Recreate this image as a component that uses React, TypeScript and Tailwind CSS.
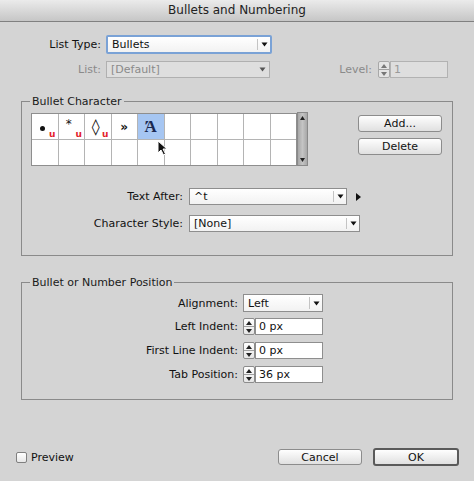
import React from "react";

function Arrow({ disabled }: { disabled?: boolean }) {
  return (
    <svg width="7" height="5" viewBox="0 0 7 5">
      <path d="M0.5 0.5 L6.5 0.5 L3.5 4.5 Z" fill={disabled ? "#555" : "#111"} />
    </svg>
  );
}

function Select({
  cls,
  value,
  disabled,
  focus,
  sep = true,
}: {
  cls: string;
  value: string;
  disabled?: boolean;
  focus?: boolean;
  sep?: boolean;
}) {
  return (
    <div
      className={
        cls +
        " flex items-stretch " +
        (focus
          ? "border-2 border-[#7aa2d6] rounded-[2px] "
          : "border border-[#8e8e8e] ") +
        (disabled
          ? "bg-[#dedede] border-[#b0b0b0] text-[#8a8a8a]"
          : "bg-gradient-to-b from-[#ffffff] to-[#f2f2f2] text-[#111]")
      }
    >
      <div className="flex-1 flex items-center pl-[4px] whitespace-nowrap overflow-hidden">
        {value}
      </div>
      <div
        className={
          "w-[13px] my-[2px] flex items-center justify-center " +
          (sep ? "border-l border-[#c4c4c4]" : "")
        }
      >
        <Arrow disabled={disabled} />
      </div>
    </div>
  );
}

function Spinner({ disabled }: { disabled?: boolean }) {
  const c = disabled ? "#777" : "#222";
  return (
    <div
      className={
        "w-[12px] h-[17px] flex flex-col border rounded-[2px] " +
        (disabled
          ? "border-[#a8a8a8] bg-[#e4e4e4]"
          : "border-[#8c8c8c] bg-gradient-to-b from-[#ffffff] to-[#e6e6e6]")
      }
    >
      <div className="flex-1 flex items-center justify-center border-b border-[#a0a0a0]">
        <svg width="6" height="4" viewBox="0 0 6 4">
          <path d="M0 4 L6 4 L3 0 Z" fill={c} />
        </svg>
      </div>
      <div className="flex-1 flex items-center justify-center">
        <svg width="6" height="4" viewBox="0 0 6 4">
          <path d="M0 0 L6 0 L3 4 Z" fill={c} />
        </svg>
      </div>
    </div>
  );
}

function NumField({ value, cls }: { value: string; cls: string }) {
  return (
    <div className="flex items-center">
      <Spinner />
      <div
        className={
          cls +
          " h-[17px] border border-[#8e8e8e] bg-white flex items-center pl-[3px] text-[#111]"
        }
      >
        {value}
      </div>
    </div>
  );
}

function Button({ label, cls }: { label: string; cls: string }) {
  return (
    <div
      className={
        cls +
        " flex items-center justify-center rounded-[3px] bg-gradient-to-b from-[#fefefe] to-[#e0e0e0] text-[#111]"
      }
    >
      {label}
    </div>
  );
}

function RedU() {
  return (
    <span className="absolute right-[2px] bottom-[0px] text-[9px] leading-[9px] font-bold text-[#e3212c]">
      u
    </span>
  );
}

export default function App() {
  const cells: React.ReactNode[] = [];
  for (let i = 0; i < 20; i++) {
    let content: React.ReactNode = null;
    let sel = false;
    if (i === 0)
      content = (
        <>
          <span className="block w-[5px] h-[5px] rounded-full bg-[#111] mr-[5px] mt-[4px]" />
          <RedU />
        </>
      );
    if (i === 1)
      content = (
        <>
          <span className="text-[12px] leading-[12px] mr-[5px] mb-[5px]">*</span>
          <RedU />
        </>
      );
    if (i === 2)
      content = (
        <>
          <span className="text-[16px] leading-[16px] mr-[4px] font-bold">◊</span>
          <RedU />
        </>
      );
    if (i === 3)
      content = <span className="text-[12px] leading-[12px] font-bold">»</span>;
    if (i === 4) {
      sel = true;
      content = (
        <span className="text-[17px] leading-[17px] font-['Liberation_Serif',serif] font-bold text-[#1b2a52]">
          Ά
        </span>
      );
    }
    cells.push(
      <div
        key={i}
        className={
          "relative flex items-center justify-center " +
          (sel ? "bg-[#a6c6f2]" : "bg-white")
        }
      >
        {content}
      </div>
    );
  }

  return (
    <div className="w-[474px] h-[481px] bg-[#d4d4d4] flex flex-col font-['DejaVu_Sans',sans-serif] text-[11px] leading-[13px] text-[#111] overflow-hidden">
      {/* Title bar */}
      <div className="h-[22px] shrink-0 bg-gradient-to-b from-[#ebebeb] to-[#c6c6c6] border-b border-[#808080] flex items-center justify-center text-[12px] text-[#222]">
        Bullets and Numbering
      </div>

      <div className="flex flex-col px-[21px] pt-[13px]">
        {/* List Type */}
        <div className="flex items-center h-[19px]">
          <div className="w-[80px] text-right">List Type:</div>
          <Select cls="ml-[5px] w-[166px] h-[19px]" value="Bullets" focus />
        </div>

        {/* List / Level */}
        <div className="flex items-center h-[17px] mt-[7px]">
          <div className="w-[80px] text-right text-[#8a8a8a]">List:</div>
          <Select cls="ml-[5px] w-[164px] h-[17px]" value="[Default]" disabled sep={false} />
          <div className="ml-auto mr-[5px] flex items-center">
            <div className="text-[#8a8a8a]">Level:</div>
            <div className="ml-[6px] flex items-center">
              <Spinner disabled />
              <div className="w-[58px] h-[17px] border border-[#b2b2b2] bg-[#dedede] flex items-center pl-[3px] text-[#9a9a9a]">
                1
              </div>
            </div>
          </div>
        </div>

        {/* Bullet Character */}
        <fieldset className="mt-[17px] border border-[#8a8a8a] pb-[23px]">
          <legend className="ml-[8px] px-[2px] text-[#1a1a1a]">Bullet Character</legend>
          <div className="flex pt-[5px]">
            <div className="ml-[9px] flex items-start">
              <div className="relative w-[266px] h-[53px] grid grid-cols-10 grid-rows-[25px_25px] gap-px bg-[#b4b4b4] border border-[#8e8e8e]">
                {cells}
                <svg
                  className="absolute left-[125px] top-[26px]"
                  width="11"
                  height="16"
                  viewBox="0 0 11 16"
                >
                  <path
                    d="M1 1 L1 13 L4 10 L6.5 15 L8.5 14 L6 9 L10 9 Z"
                    fill="#111"
                    stroke="#fff"
                    strokeWidth="1"
                    strokeLinejoin="round"
                  />
                </svg>
              </div>
              <div className="w-[11px] h-[54px] -mt-[1px] border border-[#8a8a8a] bg-gradient-to-r from-[#a8a8a8] via-[#c4c4c4] to-[#a8a8a8] flex flex-col justify-between items-center py-[3px]">
                <svg width="5" height="4" viewBox="0 0 5 4">
                  <path d="M0 4 L5 4 L2.5 0 Z" fill="#222" />
                </svg>
                <svg width="5" height="4" viewBox="0 0 5 4">
                  <path d="M0 0 L5 0 L2.5 4 Z" fill="#222" />
                </svg>
              </div>
            </div>
            <div className="ml-auto mr-[10px] mt-[2px] flex flex-col gap-[6px]">
              <Button label="Add..." cls="w-[84px] h-[17px] border border-[#8c8c8c]" />
              <Button label="Delete" cls="w-[84px] h-[17px] border border-[#8c8c8c]" />
            </div>
          </div>

          <div className="flex items-center h-[17px] mt-[22px]">
            <div className="w-[161px] text-right">Text After:</div>
            <Select cls="ml-[6px] w-[158px] h-[17px]" value="^t" />
            <svg className="ml-[9px]" width="5" height="8" viewBox="0 0 5 8">
              <path d="M0 0 L5 4 L0 8 Z" fill="#111" />
            </svg>
          </div>
          <div className="flex items-center h-[17px] mt-[10px]">
            <div className="w-[161px] text-right">Character Style:</div>
            <Select cls="ml-[6px] w-[171px] h-[17px]" value="[None]" />
          </div>
        </fieldset>

        {/* Bullet or Number Position */}
        <fieldset className="mt-[20px] border border-[#8a8a8a] pb-[16px]">
          <legend className="ml-[8px] px-[2px] text-[#1a1a1a]">Bullet or Number Position</legend>
          <div className="flex flex-col pt-[5px]">
            <div className="flex items-center h-[18px]">
              <div className="w-[216px] text-right">Alignment:</div>
              <Select cls="ml-[5px] w-[80px] h-[18px]" value="Left" />
            </div>
            <div className="flex items-center h-[17px] mt-[6px]">
              <div className="w-[216px] text-right">Left Indent:</div>
              <div className="ml-[5px]">
                <NumField value="0 px" cls="w-[68px]" />
              </div>
            </div>
            <div className="flex items-center h-[17px] mt-[7px]">
              <div className="w-[216px] text-right">First Line Indent:</div>
              <div className="ml-[5px]">
                <NumField value="0 px" cls="w-[68px]" />
              </div>
            </div>
            <div className="flex items-center h-[17px] mt-[7px]">
              <div className="w-[216px] text-right">Tab Position:</div>
              <div className="ml-[5px]">
                <NumField value="36 px" cls="w-[68px]" />
              </div>
            </div>
          </div>
        </fieldset>
      </div>

      {/* Footer */}
      <div className="mt-auto flex items-center pl-[16px] pr-[15px] pb-[15px]">
        <div className="w-[11px] h-[11px] border border-[#808080] rounded-[2px] bg-gradient-to-b from-[#ffffff] to-[#e8e8e8]" />
        <div className="ml-[4px]">Preview</div>
        <Button label="Cancel" cls="ml-auto w-[84px] h-[16px] border border-[#8c8c8c]" />
        <Button label="OK" cls="ml-[11px] w-[86px] h-[18px] border-2 border-[#5a5a5a]" />
      </div>
    </div>
  );
}
